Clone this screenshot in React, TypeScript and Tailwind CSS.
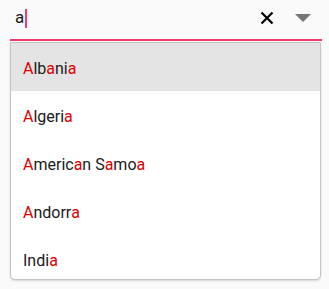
import { Fragment } from "react";

const countries = ["Albania", "Algeria", "American Samoa", "Andorra", "India"];

function Highlight({ text, q }: { text: string; q: string }) {
  const parts = text.split("");
  return (
    <>
      {parts.map((ch, i) =>
        ch.toLowerCase() === q ? (
          <span key={i} className="text-[#e00000]">
            {ch}
          </span>
        ) : (
          <Fragment key={i}>{ch}</Fragment>
        )
      )}
    </>
  );
}

export default function App() {
  return (
    <div className="w-[329px] h-[289px] bg-[#fafafa] pl-[10px] pr-[7px] font-['Roboto',sans-serif] overflow-hidden">
      {/* input */}
      <div className="h-[41px] border-b-2 border-[#f2386d] flex items-center pl-[5px] pr-[11px]">
        <div className="flex-1 flex items-center text-[17px] text-[#1a1a1a] -mt-[3px]">
          a<span className="ml-[1px] w-[2px] h-[19px] bg-[#f2386d]" />
        </div>
        <svg width="14" height="14" viewBox="0 0 14 14" className="mr-[21px] -mt-[3px]">
          <path d="M1.5 1.5 L12.5 12.5 M12.5 1.5 L1.5 12.5" stroke="#000" strokeWidth="2.2" />
        </svg>
        <svg width="16" height="8" viewBox="0 0 16 8" className="-mt-[3px]">
          <path d="M0 0 H16 L8 8 Z" fill="#757575" />
        </svg>
      </div>
      {/* dropdown */}
      <div className="mt-[1px] mr-[1px] h-[238px] overflow-hidden bg-white border border-[#c4c4c4] rounded-b-[5px] shadow-[0_1px_2px_rgba(0,0,0,0.15)]">
        {countries.map((c, i) => (
          <div
            key={c}
            className={`h-[48px] flex items-center pl-[12px] pt-[3px] text-[16px] text-[#1a1a1a] ${i === 0 ? "bg-[#e4e4e4]" : ""}`}
          >
            <Highlight text={c} q="a" />
          </div>
        ))}
      </div>
    </div>
  );
}
